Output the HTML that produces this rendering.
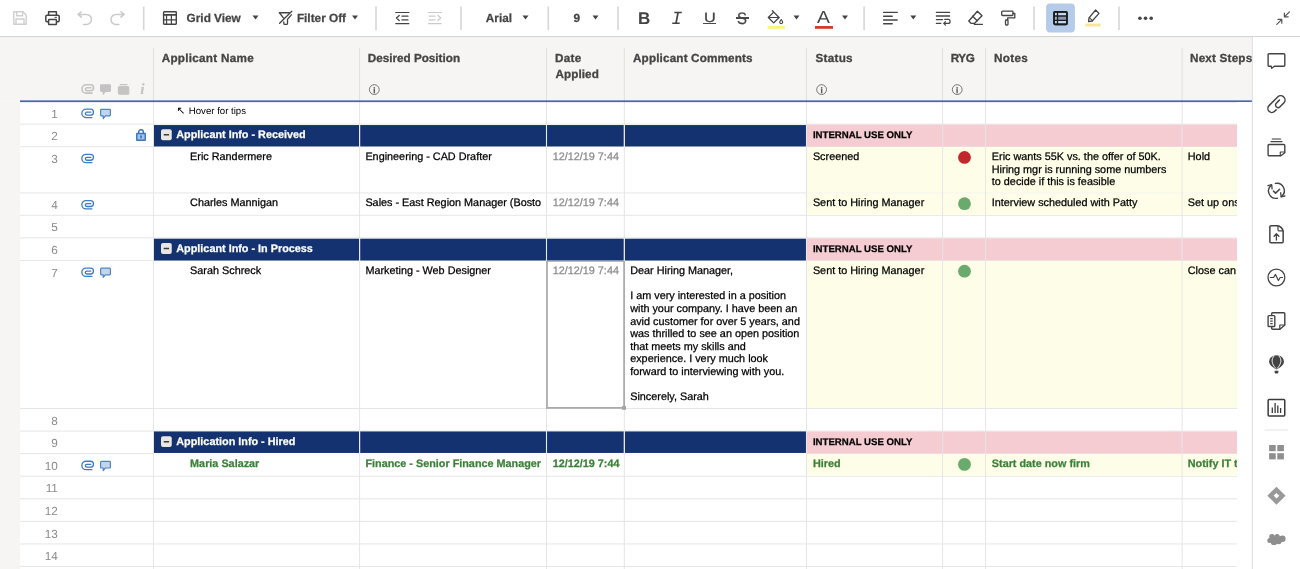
<!DOCTYPE html>
<html lang="en">
<head>
<meta charset="utf-8">
<title>Applicant Tracking - Grid View</title>
<style>
html,body{margin:0;padding:0;background:#fff;}
body{width:1300px;height:569px;overflow:hidden;position:relative;font-family:"Liberation Sans", sans-serif;}
#app{position:absolute;left:0;top:0;width:1300px;height:569px;overflow:hidden;}
#app svg{position:absolute;left:0;top:0;}
.layer{position:absolute;left:0;top:0;height:569px;overflow:hidden;will-change:transform;}
#toolbar{width:1300px;}
#colheaders{width:1252px;}
#gridbody{width:1237px;}
.t{position:absolute;white-space:pre;line-height:0;height:0;font-family:"Liberation Sans", sans-serif;text-rendering:geometricPrecision;-webkit-text-stroke:0.25px currentColor;}
.mono{font-family:"Liberation Mono",monospace;-webkit-text-stroke:0;}
.thin{-webkit-text-stroke:0;}
.semi{-webkit-text-stroke:0.3px currentColor;}
.lite{-webkit-text-stroke:0.1px currentColor;}
.dj{font-family:"DejaVu Sans",sans-serif;-webkit-text-stroke:0;}
.serif{font-family:"Liberation Serif",serif;}
.u{position:absolute;height:1.2px;background:#4a4a4a;}
</style>
</head>
<body>
<div id="app">
<svg aria-hidden="true" width="1300" height="569" viewBox="0 0 1300 569">
<rect x="0" y="0" width="1300" height="569" fill="#ffffff" />
<rect x="0" y="37" width="1252" height="64.2" fill="#f6f5f3" />
<rect x="0" y="101.2" width="20" height="467.8" fill="#f6f5f3" />
<line x1="20" y1="124.132" x2="1237" y2="124.132" stroke="#e5e5e5" stroke-width="0.95" />
<line x1="20" y1="146.701" x2="153.45" y2="146.701" stroke="#e5e5e5" stroke-width="0.95" />
<line x1="806.45" y1="146.701" x2="1237" y2="146.701" stroke="#e5e5e5" stroke-width="0.95" />
<line x1="20" y1="192.943" x2="1237" y2="192.943" stroke="#e5e5e5" stroke-width="0.95" />
<line x1="20" y1="215.312" x2="1237" y2="215.312" stroke="#e5e5e5" stroke-width="0.95" />
<line x1="20" y1="237.882" x2="1237" y2="237.882" stroke="#e5e5e5" stroke-width="0.95" />
<line x1="20" y1="260.451" x2="153.45" y2="260.451" stroke="#e5e5e5" stroke-width="0.95" />
<line x1="806.45" y1="260.451" x2="1237" y2="260.451" stroke="#e5e5e5" stroke-width="0.95" />
<line x1="20" y1="408.507" x2="1237" y2="408.507" stroke="#e5e5e5" stroke-width="0.95" />
<line x1="20" y1="431.076" x2="1237" y2="431.076" stroke="#e5e5e5" stroke-width="0.95" />
<line x1="20" y1="453.646" x2="153.45" y2="453.646" stroke="#e5e5e5" stroke-width="0.95" />
<line x1="806.45" y1="453.646" x2="1237" y2="453.646" stroke="#e5e5e5" stroke-width="0.95" />
<line x1="20" y1="476.215" x2="1237" y2="476.215" stroke="#e5e5e5" stroke-width="0.95" />
<line x1="20" y1="498.785" x2="1237" y2="498.785" stroke="#e5e5e5" stroke-width="0.95" />
<line x1="20" y1="521.354" x2="1237" y2="521.354" stroke="#e5e5e5" stroke-width="0.95" />
<line x1="20" y1="543.924" x2="1237" y2="543.924" stroke="#e5e5e5" stroke-width="0.95" />
<line x1="20" y1="566.493" x2="1237" y2="566.493" stroke="#e5e5e5" stroke-width="0.95" />
<line x1="20" y1="589.062" x2="1237" y2="589.062" stroke="#e5e5e5" stroke-width="0.95" />
<rect x="153.9" y="125.05" width="652.1" height="21.45" fill="#13326f" />
<rect x="806.9" y="124.583" width="430.1" height="22.0181" fill="#f5ccd2" />
<rect x="153.9" y="238.7" width="652.1" height="21.85" fill="#13326f" />
<rect x="806.9" y="238.333" width="430.1" height="22.0181" fill="#f5ccd2" />
<rect x="153.9" y="431.45" width="652.1" height="21.5" fill="#13326f" />
<rect x="806.9" y="431.528" width="430.1" height="22.0181" fill="#f5ccd2" />
<rect x="806.9" y="147.153" width="430.1" height="45.3389" fill="#fefee8" />
<rect x="806.9" y="193.394" width="430.1" height="21.4667" fill="#fefee8" />
<rect x="806.9" y="260.903" width="430.1" height="147.153" fill="#fefee8" />
<rect x="806.9" y="454.097" width="430.1" height="21.6667" fill="#fefee8" />
<line x1="153.45" y1="48" x2="153.45" y2="101.2" stroke="#dfdfdd" stroke-width="1" />
<line x1="153.45" y1="101.2" x2="153.45" y2="569" stroke="#e5e5e5" stroke-width="1" />
<line x1="359.6" y1="48" x2="359.6" y2="101.2" stroke="#dfdfdd" stroke-width="1" />
<line x1="359.6" y1="101.2" x2="359.6" y2="569" stroke="#e5e5e5" stroke-width="1" />
<line x1="546.5" y1="48" x2="546.5" y2="101.2" stroke="#dfdfdd" stroke-width="1" />
<line x1="546.5" y1="101.2" x2="546.5" y2="569" stroke="#e5e5e5" stroke-width="1" />
<line x1="624.35" y1="48" x2="624.35" y2="101.2" stroke="#dfdfdd" stroke-width="1" />
<line x1="624.35" y1="101.2" x2="624.35" y2="569" stroke="#e5e5e5" stroke-width="1" />
<line x1="806.45" y1="48" x2="806.45" y2="101.2" stroke="#dfdfdd" stroke-width="1" />
<line x1="806.45" y1="101.2" x2="806.45" y2="569" stroke="#e5e5e5" stroke-width="1" />
<line x1="942.6" y1="48" x2="942.6" y2="101.2" stroke="#dfdfdd" stroke-width="1" />
<line x1="942.6" y1="101.2" x2="942.6" y2="569" stroke="#e5e5e5" stroke-width="1" />
<line x1="985.6" y1="48" x2="985.6" y2="101.2" stroke="#dfdfdd" stroke-width="1" />
<line x1="985.6" y1="101.2" x2="985.6" y2="569" stroke="#e5e5e5" stroke-width="1" />
<line x1="1182.1" y1="48" x2="1182.1" y2="101.2" stroke="#dfdfdd" stroke-width="1" />
<line x1="1182.1" y1="101.2" x2="1182.1" y2="569" stroke="#e5e5e5" stroke-width="1" />
<line x1="359.6" y1="124.583" x2="359.6" y2="147.153" stroke="#e9ebf0" stroke-width="1.1" />
<line x1="546.5" y1="124.583" x2="546.5" y2="147.153" stroke="#e9ebf0" stroke-width="1.1" />
<line x1="624.35" y1="124.583" x2="624.35" y2="147.153" stroke="#e9ebf0" stroke-width="1.1" />
<line x1="359.6" y1="238.333" x2="359.6" y2="260.903" stroke="#e9ebf0" stroke-width="1.1" />
<line x1="546.5" y1="238.333" x2="546.5" y2="260.903" stroke="#e9ebf0" stroke-width="1.1" />
<line x1="624.35" y1="238.333" x2="624.35" y2="260.903" stroke="#e9ebf0" stroke-width="1.1" />
<line x1="359.6" y1="431.528" x2="359.6" y2="454.097" stroke="#e9ebf0" stroke-width="1.1" />
<line x1="546.5" y1="431.528" x2="546.5" y2="454.097" stroke="#e9ebf0" stroke-width="1.1" />
<line x1="624.35" y1="431.528" x2="624.35" y2="454.097" stroke="#e9ebf0" stroke-width="1.1" />
<line x1="20" y1="101.3" x2="1252" y2="101.3" stroke="#4a64a2" stroke-width="2.6" opacity="0.25"/>
<line x1="20" y1="101.2" x2="1252" y2="101.2" stroke="#4866a8" stroke-width="1.35" />
<line x1="0" y1="36.6" x2="1300" y2="36.6" stroke="#d0d0d0" stroke-width="1" />
<rect x="1237" y="102" width="15" height="569" fill="#ffffff" />
<rect x="1252" y="37" width="48" height="569" fill="#ffffff" />
<line x1="1252.3" y1="37" x2="1252.3" y2="569" stroke="#dcdcdc" stroke-width="1" />
<line x1="546.15" y1="261.401" x2="624.95" y2="261.401" stroke="#a9a9a9" stroke-width="0.9" />
<line x1="547" y1="260.951" x2="547" y2="408.757" stroke="#a9a9a9" stroke-width="1.7" />
<line x1="624.1" y1="260.951" x2="624.1" y2="408.757" stroke="#a9a9a9" stroke-width="1.7" />
<line x1="546.15" y1="407.907" x2="624.95" y2="407.907" stroke="#a9a9a9" stroke-width="1.7" />
<rect x="622" y="406.107" width="4" height="3.7" fill="#a4a4a4" />
<g transform="translate(13 11)" stroke="#cfcfcf" stroke-width="1.4" fill="none" stroke-linecap="round" stroke-linejoin="round" ><path d="M0.8 0.8h9.2l3.2 3.2v9.2h-12.4z"/><path d="M3.6 0.8v4h6v-4M3 13.2v-5.2h8v5.2"/></g>
<g transform="translate(45 11)" stroke="#444444" stroke-width="1.5" fill="none" stroke-linecap="round" stroke-linejoin="round" ><path d="M3.6 4.2v-3.4h7.8v3.4"/><rect x="0.8" y="4.2" width="13.4" height="6.6" rx="1.2"/><rect x="3.6" y="8.4" width="7.8" height="5.2" rx="0.6" fill="#fff"/><path d="M10 6.4h1.6" stroke-width="1"/></g>
<g transform="translate(0 0)" stroke="#cacaca" stroke-width="1.5" fill="none" stroke-linecap="round" stroke-linejoin="round" ><path d="M81.3 11.700L78.100 14.400L81.300 17.100M78.300 14.400H86.400A5 5 0 0 1 86.400 24.400H83.500"/></g>
<g transform="translate(0 0)" stroke="#cacaca" stroke-width="1.5" fill="none" stroke-linecap="round" stroke-linejoin="round" ><path d="M120.900 11.700L124.100 14.400L120.900 17.100M123.900 14.400H116A5 5 0 0 0 116 24.400H118.900"/></g>
<g transform="translate(162.9 11)" stroke="#444444" stroke-width="1.4" fill="none" stroke-linecap="round" stroke-linejoin="round" ><rect x="0.700" y="0.700" width="12.700" height="12.600" rx="0.700"/><path d="M0.700 3.900h12.700" stroke-width="1.600"/><path d="M0.700 8.800h12.700M3.650 3.900v9.400M8.500 3.900v9.400" stroke-width="1.200"/></g>
<g transform="translate(0 0)" stroke="#444444" stroke-width="1.3" fill="none" stroke-linecap="round" stroke-linejoin="round" ><path d="M279.400 12.800H289.300" stroke-width="1.500"/><path d="M279.600 13L283.600 18.100"/><path d="M283.800 22V23.400a1 1 0 0 0 1 1h1.700a1 1 0 0 0 1-1V19.400L291.300 14.800"/><path d="M291.800 11.300L279.600 23.200"/></g>
<g transform="translate(0 0)" stroke="#444444" stroke-width="1.2" fill="none" stroke-linecap="round" stroke-linejoin="round" ><path d="M395.700 12.450H408.950M395.700 23.600H408.950M401.900 16.150H408M401.900 19.900H408" stroke-width="1.150"/><path d="M399.200 15.500L396.450 18L399.200 20.500" stroke-width="1.300"/></g>
<g transform="translate(0 0)" stroke="#cacaca" stroke-width="1.2" fill="none" stroke-linecap="round" stroke-linejoin="round" ><path d="M428.450 12.450H441.200M428.450 23.600H441.200M429.400 16.150H435M429.400 19.900H435" stroke-width="1.150"/><path d="M438 15.500L440.750 18L438 20.500" stroke-width="1.300"/></g>
<g transform="translate(0 0)" stroke="#444444" stroke-width="1.3" fill="none" stroke-linecap="round" stroke-linejoin="round" ><path d="M773.700 12.100l5.400 5.400-5.400 5.400-5.400-5.400z"/><path d="M773.700 12.100l-1.300-1.300"/><path d="M768.600 17.500h10.200" stroke-width="1.200"/><path d="M781.200 19.500c1 1.400 1.500 2 1.500 2.600a1.500 1.500 0 0 1-3 0c0-0.600 0.500-1.200 1.500-2.600z" stroke-width="1.100"/></g>
<rect x="767.500" y="26" width="17.500" height="2.800" fill="#fdf47c"/>
<rect x="815" y="26" width="18" height="2.800" fill="#d93a30"/>
<g transform="translate(883 11)" stroke="#444444" stroke-width="1.4" fill="none" stroke-linecap="round" stroke-linejoin="round" ><path d="M0.6 1.4h13.6M0.6 5.2h8.6M0.6 9h13.6M0.6 12.8h8.6"/></g>
<g transform="translate(935.5 11)" stroke="#444444" stroke-width="1.3" fill="none" stroke-linecap="round" stroke-linejoin="round" ><path d="M0.900 1.400h13.200M0.900 5h13.200M0.900 8.600h6.200M0.900 12.400h4.400"/><path d="M9.2 8.4h3.4a2 2 0 0 1 0 4h-4M10 10.6l-1.8 1.8 1.8 1.8" stroke-width="1.2"/></g>
<g transform="translate(968 10)" stroke="#444444" stroke-width="1.4" fill="none" stroke-linecap="round" stroke-linejoin="round" ><path d="M9.4 1.2l4.6 4.6-7.6 7.6h-3.2l-2.4-2.4z"/><path d="M4.6 6.2l4.6 4.6M6.4 14.4h8" stroke-width="1.3"/></g>
<g transform="translate(1001 10)" stroke="#444444" stroke-width="1.3" fill="none" stroke-linecap="round" stroke-linejoin="round" ><rect x="0.700" y="1.200" width="11.300" height="4.300" rx="0.800"/><path d="M12 3.400h1.800v4.500h-7.100v2.100"/><rect x="4.500" y="10" width="2.500" height="5" rx="0.800"/></g>
<rect x="1046.100" y="3.600" width="28.800" height="28.800" rx="4" fill="#b4cbe9"/>
<g transform="translate(1053.2 11)" stroke="#1c1c1c" stroke-width="1.7" fill="none" stroke-linecap="round" stroke-linejoin="round" ><rect x="0.900" y="0.900" width="12.800" height="12.400" rx="1" fill="#c4d6f2"/><rect x="4.300" y="5" width="9.400" height="4.400" fill="#8797b0" stroke="none"/><rect x="0.900" y="5" width="3.400" height="4.400" fill="#9fb0cc" stroke="none"/><path d="M0.900 5h12.800M0.900 9.400h12.800M4.300 0.900v12.400" stroke-width="1.300"/><rect x="0.900" y="0.900" width="12.800" height="12.400" rx="1"/></g>
<g transform="translate(1086 9)" stroke="#444444" stroke-width="1.3" fill="none" stroke-linecap="round" stroke-linejoin="round" ><path d="M9.6 1l3.4 3.4-6.8 7.6-3.6 0.6 0.4-3.8z"/><path d="M3.4 8.6l3 3" stroke-width="1.2"/></g>
<rect x="1085.5" y="23.6" width="15" height="2.8" fill="#fde493"/>
<circle cx="1139.9" cy="18.200" r="1.800" fill="#444444"/>
<circle cx="1145.55" cy="18.200" r="1.800" fill="#444444"/>
<circle cx="1151.2" cy="18.200" r="1.800" fill="#444444"/>
<g transform="translate(1276 11)" stroke="#555" stroke-width="1.2" fill="none" stroke-linecap="round" stroke-linejoin="round" ><path d="M13.4 0.8l-5 5M8.4 2v3.8h3.8M0.8 13.4l5-5M5.8 12.2v-3.8h-3.8"/></g>
<path d="M252.5 15.400h6l-3 4.100z" fill="#444444"/>
<path d="M352 15.400h6l-3 4.100z" fill="#444444"/>
<path d="M522.5 15.400h6l-3 4.100z" fill="#444444"/>
<path d="M592.5 15.400h6l-3 4.100z" fill="#444444"/>
<path d="M793.5 15.400h6l-3 4.100z" fill="#444444"/>
<path d="M842 15.400h6l-3 4.100z" fill="#444444"/>
<path d="M910.3 15.400h6l-3 4.100z" fill="#444444"/>
<line x1="143.7" y1="6.5" x2="143.7" y2="30" stroke="#d6d6d6" stroke-width="1.6"/>
<line x1="376" y1="6.5" x2="376" y2="30" stroke="#d6d6d6" stroke-width="1.6"/>
<line x1="461" y1="6.5" x2="461" y2="30" stroke="#d6d6d6" stroke-width="1.6"/>
<line x1="548.3" y1="6.5" x2="548.3" y2="30" stroke="#d6d6d6" stroke-width="1.6"/>
<line x1="618" y1="6.5" x2="618" y2="30" stroke="#d6d6d6" stroke-width="1.6"/>
<line x1="864.1" y1="6.5" x2="864.1" y2="30" stroke="#d6d6d6" stroke-width="1.6"/>
<line x1="1034" y1="6.5" x2="1034" y2="30" stroke="#d6d6d6" stroke-width="1.6"/>
<line x1="1119" y1="6.5" x2="1119" y2="30" stroke="#d6d6d6" stroke-width="1.6"/>
<g transform="translate(81.3 84.1)" stroke="#c3c3c3" stroke-width="1.6" fill="none" stroke-linecap="round" stroke-linejoin="round" ><path d="M9.6 3.7H5.6a1.45 1.45 0 0 0 0 2.9H9.3a2.975 2.975 0 0 0 0-5.95H4.85a4.2 4.2 0 0 0 0 8.4H10.7"/></g>
<g transform="translate(100 84.2)" stroke="#c3c3c3" stroke-width="1.2" fill="#c3c3c3" stroke-linecap="round" stroke-linejoin="round" ><path d="M1.4 0.6h8.2a0.8 0.8 0 0 1 0.8 0.8v5a0.8 0.8 0 0 1-0.8 0.8h-4.2l-2.2 2.6v-2.6h-1.8a0.8 0.8 0 0 1-0.8-0.8v-5a0.8 0.8 0 0 1 0.8-0.8z"/></g>
<g transform="translate(118 84)" stroke="#c4c4c4" stroke-width="1.1" fill="#c4c4c4" stroke-linecap="round" stroke-linejoin="round" ><rect x="0.4" y="2.6" width="10.4" height="7.6" rx="1" /><path d="M2.2 0.6h6.8" /></g>
<g transform="translate(81.2 108.513)" stroke="#3f7cc4" stroke-width="1.3" fill="none" stroke-linecap="round" stroke-linejoin="round" ><path d="M9.6 3.7H5.6a1.45 1.45 0 0 0 0 2.9H9.3a2.975 2.975 0 0 0 0-5.95H4.85a4.2 4.2 0 0 0 0 8.4H10.7"/></g>
<g transform="translate(100 108.713)" stroke="#4a86c8" stroke-width="1.2" fill="#c3d5ec" stroke-linecap="round" stroke-linejoin="round" ><path d="M1.4 0.6h8.2a0.8 0.8 0 0 1 0.8 0.8v5a0.8 0.8 0 0 1-0.8 0.8h-4.2l-2.2 2.6v-2.6h-1.8a0.8 0.8 0 0 1-0.8-0.8v-5a0.8 0.8 0 0 1 0.8-0.8z"/></g>
<g transform="translate(81.2 153.651)" stroke="#3f7cc4" stroke-width="1.3" fill="none" stroke-linecap="round" stroke-linejoin="round" ><path d="M9.6 3.7H5.6a1.45 1.45 0 0 0 0 2.9H9.3a2.975 2.975 0 0 0 0-5.95H4.85a4.2 4.2 0 0 0 0 8.4H10.7"/></g>
<g transform="translate(81.2 199.893)" stroke="#3f7cc4" stroke-width="1.3" fill="none" stroke-linecap="round" stroke-linejoin="round" ><path d="M9.6 3.7H5.6a1.45 1.45 0 0 0 0 2.9H9.3a2.975 2.975 0 0 0 0-5.95H4.85a4.2 4.2 0 0 0 0 8.4H10.7"/></g>
<g transform="translate(81.2 267.401)" stroke="#3f7cc4" stroke-width="1.3" fill="none" stroke-linecap="round" stroke-linejoin="round" ><path d="M9.6 3.7H5.6a1.45 1.45 0 0 0 0 2.9H9.3a2.975 2.975 0 0 0 0-5.95H4.85a4.2 4.2 0 0 0 0 8.4H10.7"/></g>
<g transform="translate(100 267.601)" stroke="#4a86c8" stroke-width="1.2" fill="#c3d5ec" stroke-linecap="round" stroke-linejoin="round" ><path d="M1.4 0.6h8.2a0.8 0.8 0 0 1 0.8 0.8v5a0.8 0.8 0 0 1-0.8 0.8h-4.2l-2.2 2.6v-2.6h-1.8a0.8 0.8 0 0 1-0.8-0.8v-5a0.8 0.8 0 0 1 0.8-0.8z"/></g>
<g transform="translate(81.2 460.596)" stroke="#3f7cc4" stroke-width="1.3" fill="none" stroke-linecap="round" stroke-linejoin="round" ><path d="M9.6 3.7H5.6a1.45 1.45 0 0 0 0 2.9H9.3a2.975 2.975 0 0 0 0-5.95H4.85a4.2 4.2 0 0 0 0 8.4H10.7"/></g>
<g transform="translate(100 460.796)" stroke="#4a86c8" stroke-width="1.2" fill="#c3d5ec" stroke-linecap="round" stroke-linejoin="round" ><path d="M1.4 0.6h8.2a0.8 0.8 0 0 1 0.8 0.8v5a0.8 0.8 0 0 1-0.8 0.8h-4.2l-2.2 2.6v-2.6h-1.8a0.8 0.8 0 0 1-0.8-0.8v-5a0.8 0.8 0 0 1 0.8-0.8z"/></g>
<g transform="translate(135.8 129.202)" stroke="#3a74bc" stroke-width="1.4" fill="none" stroke-linecap="round" stroke-linejoin="round" ><path d="M2.850 4.200v-1.300a2.350 2.350 0 0 1 4.700 0v1.300" stroke-width="1.400"/><rect x="0.950" y="4.350" width="8.500" height="6.750" rx="0.300" fill="#a9c2e4" stroke-width="1.400"/><circle cx="5.200" cy="7" r="0.950" fill="#3a72b8" stroke="none"/><path d="M5.200 7.200v2" stroke-width="1.300" stroke-linecap="butt"/></g>
<circle cx="374.3" cy="89.6" r="4.9" fill="none" stroke="#666" stroke-width="0.9"/>
<circle cx="821.6" cy="89.6" r="4.9" fill="none" stroke="#666" stroke-width="0.9"/>
<circle cx="957.2" cy="89.6" r="4.9" fill="none" stroke="#666" stroke-width="0.9"/>
<rect x="161" y="129.232" width="10.75" height="10.9" rx="2" fill="#e8e7e4"/><rect x="163.7" y="133.982" width="5.4" height="1.6" rx="0.3" fill="#3a3a3a"/>
<rect x="161" y="242.982" width="10.75" height="10.9" rx="2" fill="#e8e7e4"/><rect x="163.7" y="247.732" width="5.4" height="1.6" rx="0.3" fill="#3a3a3a"/>
<rect x="161" y="436.176" width="10.75" height="10.9" rx="2" fill="#e8e7e4"/><rect x="163.7" y="440.926" width="5.4" height="1.6" rx="0.3" fill="#3a3a3a"/>
<circle cx="964.5" cy="157.451" r="6.400" fill="#c1272d"/>
<circle cx="964.5" cy="203.693" r="6.400" fill="#6aaa6d"/>
<circle cx="964.5" cy="271.201" r="6.400" fill="#6aaa6d"/>
<circle cx="964.5" cy="464.396" r="6.400" fill="#6aaa6d"/>
<g transform="translate(1267.4 53.1)" stroke="#444444" stroke-width="1.4" fill="none" stroke-linecap="round" stroke-linejoin="round" ><path d="M1.7 0.7h14.7a1 1 0 0 1 1 1v10.4a1 1 0 0 1-1 1h-9.4l-2.7 2.1-0.5-2.100h-2.100a1 1 0 0 1-1-1v-10.400a1 1 0 0 1 1-1z"/></g>
<g transform="translate(1280.700 100.050) rotate(135)" fill="none" stroke="#444444" stroke-width="1.500" stroke-linecap="round" stroke-linejoin="round"><path d="M1 0.900H5.300A2.600 2.600 0 0 0 5.300 -4.300H0A4.300 4.300 0 0 0 0 4.300H12.200A4 4 0 0 0 12.200 -3.700H10.200"/></g>
<g transform="translate(1267.4 143.8)" stroke="#444444" stroke-width="1.4" fill="none" stroke-linecap="round" stroke-linejoin="round" ><path d="M1.700 0.700h14.700a1 1 0 0 1 1 1v7.200l-3.900 3h-11.800a1 1 0 0 1-1-1v-9.200a1 1 0 0 1 1-1z"/><path d="M12.900 11.900v-3.700h4.300" stroke-width="1.200"/><path d="M3.500 -2.200h11.100" stroke-width="1.100"/><path d="M4.900 -4.850h8.300" stroke="#777" stroke-width="1.400"/></g>
<g transform="translate(1276.4 190.8)" stroke="#444444" stroke-width="1.4" fill="none" stroke-linecap="round" stroke-linejoin="round" ><path d="M-1 -7.400A7.400 7.400 0 0 1 5 5.700"/><path d="M1 7.400A7.400 7.400 0 0 1 -5 -5.700"/><path d="M4.300 1.900l0.400 4.200 3.800 -0.900" stroke-width="1.300"/><path d="M-4.300 -1.900l-0.400 -4.200 -3.800 0.900" stroke-width="1.300"/><path d="M-2.900 0.300l2.100 2 4 -3.800" stroke-width="1.500"/></g>
<g transform="translate(1269.1 225)" stroke="#444444" stroke-width="1.5" fill="none" stroke-linecap="round" stroke-linejoin="round" ><path d="M1.750 0.750h6.600c2.600 0 5.700 3.100 5.700 5.700v10.250a1 1 0 0 1-1 1h-11.300a1 1 0 0 1-1-1v-14.950a1 1 0 0 1 1-1z"/><path d="M8.900 0.900v4.200a0.800 0.800 0 0 0 0.800 0.800h4.200" stroke-width="1.200"/><path d="M7.300 15v-6M5 11.200l2.300-2.500 2.500 2.500" stroke-width="1.300"/></g>
<g transform="translate(1276.4 277.5)" stroke="#444444" stroke-width="1.3" fill="none" stroke-linecap="round" stroke-linejoin="round" ><circle cx="0" cy="0" r="8.400"/><path d="M-6.100 0h3.300l1.900 -3.100 2.900 6.100 1.800 -3h2.300" stroke-width="1.200"/></g>
<g transform="translate(1267.4 312)" stroke="#444444" stroke-width="1.4" fill="none" stroke-linecap="round" stroke-linejoin="round" ><path d="M4.300 3v-1.400a0.900 0.900 0 0 1 0.900-0.900h11.300a0.900 0.900 0 0 1 0.900 0.900v11.300l-4.900 4.400h-7.300a0.900 0.900 0 0 1-0.900-0.900v-1.400"/><path d="M12.400 17.100v-4.100h4.800" stroke-width="1.200"/><rect x="0.700" y="3.600" width="6.700" height="10.900" rx="0.800" fill="#fff"/><path d="M2.800 6.600h2.500M2.800 9.100h2.500M2.800 11.600h2.500" stroke-width="1.100" stroke-linecap="butt"/></g>
<g transform="translate(1269.1 355.25)" stroke="#444444" stroke-width="1" fill="none" stroke-linecap="round" stroke-linejoin="round" ><path d="M7.400 0C11.700 0 14.800 2.800 14.800 6.500 14.800 10 10.600 12.400 7.400 14.200 4.200 12.400 0 10 0 6.500 0 2.800 3.100 0 7.400 0z" fill="#444" stroke="none"/><path d="M5 0.700C1.800 3.700 2.300 8.700 6.600 13M9.800 0.700C13 3.700 12.500 8.700 8.200 13" stroke="#fff" stroke-width="0.900"/><path d="M5.500 15.600h3.800v1.400a1.300 1.300 0 0 1-1.300 1.300h-1.200a1.300 1.300 0 0 1-1.300-1.300z" fill="#444" stroke="none"/></g>
<g transform="translate(1267.4 398.8)" stroke="#3a3a3a" stroke-width="1.5" fill="none" stroke-linecap="round" stroke-linejoin="round" ><rect x="0.750" y="0.750" width="16.600" height="16.500" rx="1"/><path d="M4.900 14.100v-5.400M7.700 14.100v-10M10.400 14.100v-7.400M13.200 14.100v-4.800" stroke-width="1.300" stroke-linecap="butt"/></g>
<line x1="1264.700" y1="430" x2="1288" y2="430" stroke="#e4e4e4" stroke-width="1"/>
<rect x="1269.1" y="445" width="6.600" height="6.200" fill="#8f8f8f"/>
<rect x="1277.3" y="445" width="6.600" height="6.200" fill="#8f8f8f"/>
<rect x="1269.1" y="453.2" width="6.600" height="6.200" fill="#8f8f8f"/>
<rect x="1277.3" y="453.2" width="6.600" height="6.200" fill="#8f8f8f"/>
<path d="M1276.450 486.700l9.100 9-9.100 9-9.100-9z" fill="#999999"/><path d="M1276.450 492.900l2.800 2.800-2.800 2.800-2.800-2.800z" fill="#fff"/>
<g fill="#8e8e8e"><circle cx="1272" cy="536.700" r="2.800"/><circle cx="1277.100" cy="536.600" r="2.600"/><circle cx="1282.400" cy="538.700" r="3.200"/><circle cx="1269.800" cy="540.500" r="2.500"/><circle cx="1274" cy="541.900" r="3.200"/><circle cx="1278.600" cy="541.300" r="3"/><rect x="1270" y="536.500" width="12" height="5.500"/></g>
</svg>
<div id="toolbar" class="layer" role="toolbar" aria-label="Sheet toolbar">
<span class="t" style="left:186.6px;top:18px;font-size:11.8px;color:#444444;font-weight:bold;">Grid View</span>
<span class="t" style="left:296.9px;top:18px;font-size:11.8px;color:#444444;font-weight:bold;">Filter Off</span>
<span class="t" style="left:485.8px;top:18px;font-size:11.8px;color:#444444;font-weight:bold;">Arial</span>
<span class="t" style="left:573.6px;top:18px;font-size:11.8px;color:#444444;font-weight:bold;">9</span>
<span class="t thin" style="left:638px;top:19px;font-size:17px;color:#444444;font-weight:bold;">B</span>
<span class="t mono" style="left:671.3px;top:20px;font-size:18.5px;color:#444444;font-style:italic;">I</span>
<span class="t" style="left:704px;top:18px;font-size:13.4px;color:#444444;transform:scaleX(1.22);transform-origin:0 0;">U</span>
<span class="t" style="left:737.3px;top:19px;font-size:16.6px;color:#444444;transform:scaleX(0.9);transform-origin:0 0;">S</span>
<span class="t thin" style="left:817.3px;top:17px;font-size:17.6px;color:#444444;transform:scaleX(1.1);transform-origin:0 0;">A</span>
<span class="u" style="left:703.3px;top:22.9px;width:12.7px"></span>
<span class="u" style="left:736px;top:17.4px;width:12.5px"></span>
</div>
<div id="colheaders" class="layer" role="row" aria-label="Column headers">
<span class="t serif thin" style="left:140.2px;top:90px;font-size:15.5px;color:#c2c2c2;font-weight:bold;font-style:italic;">i</span>
<span class="t" style="left:374.3px;top:91px;font-size:8px;color:#555;font-weight:bold;transform:translate(-50%,0);">i</span>
<span class="t" style="left:821.6px;top:91px;font-size:8px;color:#555;font-weight:bold;transform:translate(-50%,0);">i</span>
<span class="t" style="left:957.2px;top:91px;font-size:8px;color:#555;font-weight:bold;transform:translate(-50%,0);">i</span>
<span class="t semi" style="left:161.7px;top:59px;font-size:11.7px;color:#444444;font-weight:bold;letter-spacing:0.28px;">Applicant Name</span>
<span class="t semi" style="left:367.7px;top:59px;font-size:11.7px;color:#444444;font-weight:bold;letter-spacing:0.01px;">Desired Position</span>
<span class="t semi" style="left:555px;top:59px;font-size:11.7px;color:#444444;font-weight:bold;letter-spacing:0.29px;">Date</span>
<span class="t semi" style="left:555.4px;top:75px;font-size:11.7px;color:#444444;font-weight:bold;letter-spacing:0.09px;">Applied</span>
<span class="t semi" style="left:633px;top:59px;font-size:11.7px;color:#444444;font-weight:bold;letter-spacing:0.16px;">Applicant Comments</span>
<span class="t semi" style="left:815.4px;top:59px;font-size:11.7px;color:#444444;font-weight:bold;letter-spacing:0.3px;">Status</span>
<span class="t semi" style="left:950.7px;top:59px;font-size:11.7px;color:#444444;font-weight:bold;letter-spacing:-0.39px;">RYG</span>
<span class="t semi" style="left:994px;top:59px;font-size:11.7px;color:#444444;font-weight:bold;letter-spacing:0.33px;">Notes</span>
<span class="t semi" style="left:1190px;top:59px;font-size:11.7px;color:#444444;font-weight:bold;letter-spacing:0.2px;">Next Steps</span>
</div>
<div id="gridbody" class="layer" role="grid" aria-label="Applicant tracking sheet">
<div class="row" role="row" aria-rowindex="1">
<div class="cell rownum" role="rowheader">
<span class="t thin" style="left:57.9px;top:115px;font-size:11.74px;color:#8a8a8a;transform:translate(-100%,0);">1</span>
</div>
<div class="cell c-name" role="gridcell">
<span class="t dj" style="left:176.4px;top:111px;font-size:10.6px;color:#000;">↖</span>
<span class="t thin" style="left:188.8px;top:112px;font-size:9.63px;color:#000;">Hover for tips</span>
</div>
</div>
<div class="row" role="row" aria-rowindex="2">
<div class="cell rownum" role="rowheader">
<span class="t thin" style="left:57.9px;top:137px;font-size:11.74px;color:#8a8a8a;transform:translate(-100%,0);">2</span>
</div>
<div class="cell c-name" role="gridcell">
<span class="t" style="left:176.3px;top:135px;font-size:10.83px;color:#fff;font-weight:bold;">Applicant Info - Received</span>
</div>
<div class="cell c-status" role="gridcell">
<span class="t" style="left:812.9px;top:136px;font-size:9.63px;color:#000;font-weight:bold;">INTERNAL USE ONLY</span>
</div>
</div>
<div class="row" role="row" aria-rowindex="3">
<div class="cell rownum" role="rowheader">
<span class="t thin" style="left:57.9px;top:160px;font-size:11.74px;color:#8a8a8a;transform:translate(-100%,0);">3</span>
</div>
<div class="cell c-name" role="gridcell">
<span class="t" style="left:190.1px;top:157px;font-size:10.83px;color:#000;">Eric Randermere</span>
</div>
<div class="cell c-pos" role="gridcell">
<span class="t" style="left:365.4px;top:157px;font-size:10.83px;color:#000;">Engineering - CAD Drafter</span>
</div>
<div class="cell c-date" role="gridcell">
<span class="t" style="left:552.7px;top:157px;font-size:10.83px;color:#8b8b8b;">12/12/19 7:44</span>
</div>
<div class="cell c-status" role="gridcell">
<span class="t" style="left:812.9px;top:157px;font-size:10.83px;color:#000;">Screened</span>
</div>
<div class="cell c-notes" role="gridcell">
<span class="t" style="left:991.8px;top:157px;font-size:10.83px;color:#000;">Eric wants 55K vs. the offer of 50K.</span>
<span class="t" style="left:991.8px;top:170px;font-size:10.83px;color:#000;">Hiring mgr is running some numbers</span>
<span class="t" style="left:991.8px;top:182px;font-size:10.83px;color:#000;">to decide if this is feasible</span>
</div>
<div class="cell c-next" role="gridcell">
<span class="t" style="left:1187.8px;top:157px;font-size:10.83px;color:#000;">Hold</span>
</div>
</div>
<div class="row" role="row" aria-rowindex="4">
<div class="cell rownum" role="rowheader">
<span class="t thin" style="left:57.9px;top:206px;font-size:11.74px;color:#8a8a8a;transform:translate(-100%,0);">4</span>
</div>
<div class="cell c-name" role="gridcell">
<span class="t" style="left:190.1px;top:203px;font-size:10.83px;color:#000;">Charles Mannigan</span>
</div>
<div class="cell c-pos" role="gridcell">
<span class="t" style="left:365.4px;top:203px;font-size:10.83px;color:#000;">Sales - East Region Manager (Bosto</span>
</div>
<div class="cell c-date" role="gridcell">
<span class="t" style="left:552.7px;top:203px;font-size:10.83px;color:#8b8b8b;">12/12/19 7:44</span>
</div>
<div class="cell c-status" role="gridcell">
<span class="t" style="left:812.9px;top:203px;font-size:10.83px;color:#000;">Sent to Hiring Manager</span>
</div>
<div class="cell c-notes" role="gridcell">
<span class="t" style="left:991.8px;top:203px;font-size:10.83px;color:#000;">Interview scheduled with Patty</span>
</div>
<div class="cell c-next" role="gridcell">
<span class="t" style="left:1187.8px;top:203px;font-size:10.83px;color:#000;">Set up ons</span>
</div>
</div>
<div class="row" role="row" aria-rowindex="5">
<div class="cell rownum" role="rowheader">
<span class="t thin" style="left:57.9px;top:228px;font-size:11.74px;color:#8a8a8a;transform:translate(-100%,0);">5</span>
</div>
</div>
<div class="row" role="row" aria-rowindex="6">
<div class="cell rownum" role="rowheader">
<span class="t thin" style="left:57.9px;top:251px;font-size:11.74px;color:#8a8a8a;transform:translate(-100%,0);">6</span>
</div>
<div class="cell c-name" role="gridcell">
<span class="t" style="left:176.3px;top:249px;font-size:10.83px;color:#fff;font-weight:bold;">Applicant Info - In Process</span>
</div>
<div class="cell c-status" role="gridcell">
<span class="t" style="left:812.9px;top:250px;font-size:9.63px;color:#000;font-weight:bold;">INTERNAL USE ONLY</span>
</div>
</div>
<div class="row" role="row" aria-rowindex="7">
<div class="cell rownum" role="rowheader">
<span class="t thin" style="left:57.9px;top:274px;font-size:11.74px;color:#8a8a8a;transform:translate(-100%,0);">7</span>
</div>
<div class="cell c-name" role="gridcell">
<span class="t" style="left:190.1px;top:271px;font-size:10.83px;color:#000;">Sarah Schreck</span>
</div>
<div class="cell c-pos" role="gridcell">
<span class="t" style="left:365.4px;top:271px;font-size:10.83px;color:#000;">Marketing - Web Designer</span>
</div>
<div class="cell c-date" role="gridcell">
<span class="t" style="left:552.7px;top:271px;font-size:10.83px;color:#8b8b8b;">12/12/19 7:44</span>
</div>
<div class="cell c-comm" role="gridcell">
<span class="t" style="left:630.2px;top:271px;font-size:10.83px;color:#000;">Dear Hiring Manager,</span>
<span class="t" style="left:630.2px;top:296px;font-size:10.83px;color:#000;">I am very interested in a position</span>
<span class="t" style="left:630.2px;top:309px;font-size:10.83px;color:#000;">with your company. I have been an</span>
<span class="t" style="left:630.2px;top:322px;font-size:10.83px;color:#000;">avid customer for over 5 years, and</span>
<span class="t" style="left:630.2px;top:334px;font-size:10.83px;color:#000;">was thrilled to see an open position</span>
<span class="t" style="left:630.2px;top:347px;font-size:10.83px;color:#000;">that meets my skills and</span>
<span class="t" style="left:630.2px;top:359px;font-size:10.83px;color:#000;">experience. I very much look</span>
<span class="t" style="left:630.2px;top:372px;font-size:10.83px;color:#000;">forward to interviewing with you.</span>
<span class="t" style="left:630.2px;top:397px;font-size:10.83px;color:#000;">Sincerely, Sarah</span>
</div>
<div class="cell c-status" role="gridcell">
<span class="t" style="left:812.9px;top:271px;font-size:10.83px;color:#000;">Sent to Hiring Manager</span>
</div>
<div class="cell c-next" role="gridcell">
<span class="t" style="left:1187.8px;top:271px;font-size:10.83px;color:#000;">Close can</span>
</div>
</div>
<div class="row" role="row" aria-rowindex="8">
<div class="cell rownum" role="rowheader">
<span class="t thin" style="left:57.9px;top:422px;font-size:11.74px;color:#8a8a8a;transform:translate(-100%,0);">8</span>
</div>
</div>
<div class="row" role="row" aria-rowindex="9">
<div class="cell rownum" role="rowheader">
<span class="t thin" style="left:57.9px;top:444px;font-size:11.74px;color:#8a8a8a;transform:translate(-100%,0);">9</span>
</div>
<div class="cell c-name" role="gridcell">
<span class="t" style="left:176.3px;top:442px;font-size:10.83px;color:#fff;font-weight:bold;">Application Info - Hired</span>
</div>
<div class="cell c-status" role="gridcell">
<span class="t" style="left:812.9px;top:443px;font-size:9.63px;color:#000;font-weight:bold;">INTERNAL USE ONLY</span>
</div>
</div>
<div class="row" role="row" aria-rowindex="10">
<div class="cell rownum" role="rowheader">
<span class="t thin" style="left:57.9px;top:467px;font-size:11.74px;color:#8a8a8a;transform:translate(-100%,0);">10</span>
</div>
<div class="cell c-name" role="gridcell">
<span class="t" style="left:190.1px;top:464px;font-size:10.83px;color:#3b8038;font-weight:bold;">Maria Salazar</span>
</div>
<div class="cell c-pos" role="gridcell">
<span class="t" style="left:365.4px;top:464px;font-size:10.83px;color:#3b8038;font-weight:bold;">Finance - Senior Finance Manager</span>
</div>
<div class="cell c-date" role="gridcell">
<span class="t" style="left:552.7px;top:464px;font-size:10.83px;color:#3b8038;font-weight:bold;">12/12/19 7:44</span>
</div>
<div class="cell c-status" role="gridcell">
<span class="t" style="left:812.9px;top:464px;font-size:10.83px;color:#3b8038;font-weight:bold;">Hired</span>
</div>
<div class="cell c-notes" role="gridcell">
<span class="t" style="left:991.8px;top:464px;font-size:10.83px;color:#3b8038;font-weight:bold;">Start date now firm</span>
</div>
<div class="cell c-next" role="gridcell">
<span class="t" style="left:1187.8px;top:464px;font-size:10.83px;color:#3b8038;font-weight:bold;">Notify IT t</span>
</div>
</div>
<div class="row" role="row" aria-rowindex="11">
<div class="cell rownum" role="rowheader">
<span class="t thin" style="left:57.9px;top:489px;font-size:11.74px;color:#8a8a8a;transform:translate(-100%,0);">11</span>
</div>
</div>
<div class="row" role="row" aria-rowindex="12">
<div class="cell rownum" role="rowheader">
<span class="t thin" style="left:57.9px;top:512px;font-size:11.74px;color:#8a8a8a;transform:translate(-100%,0);">12</span>
</div>
</div>
<div class="row" role="row" aria-rowindex="13">
<div class="cell rownum" role="rowheader">
<span class="t thin" style="left:57.9px;top:535px;font-size:11.74px;color:#8a8a8a;transform:translate(-100%,0);">13</span>
</div>
</div>
<div class="row" role="row" aria-rowindex="14">
<div class="cell rownum" role="rowheader">
<span class="t thin" style="left:57.9px;top:557px;font-size:11.74px;color:#8a8a8a;transform:translate(-100%,0);">14</span>
</div>
</div>
</div>
</div>
</body>
</html>
